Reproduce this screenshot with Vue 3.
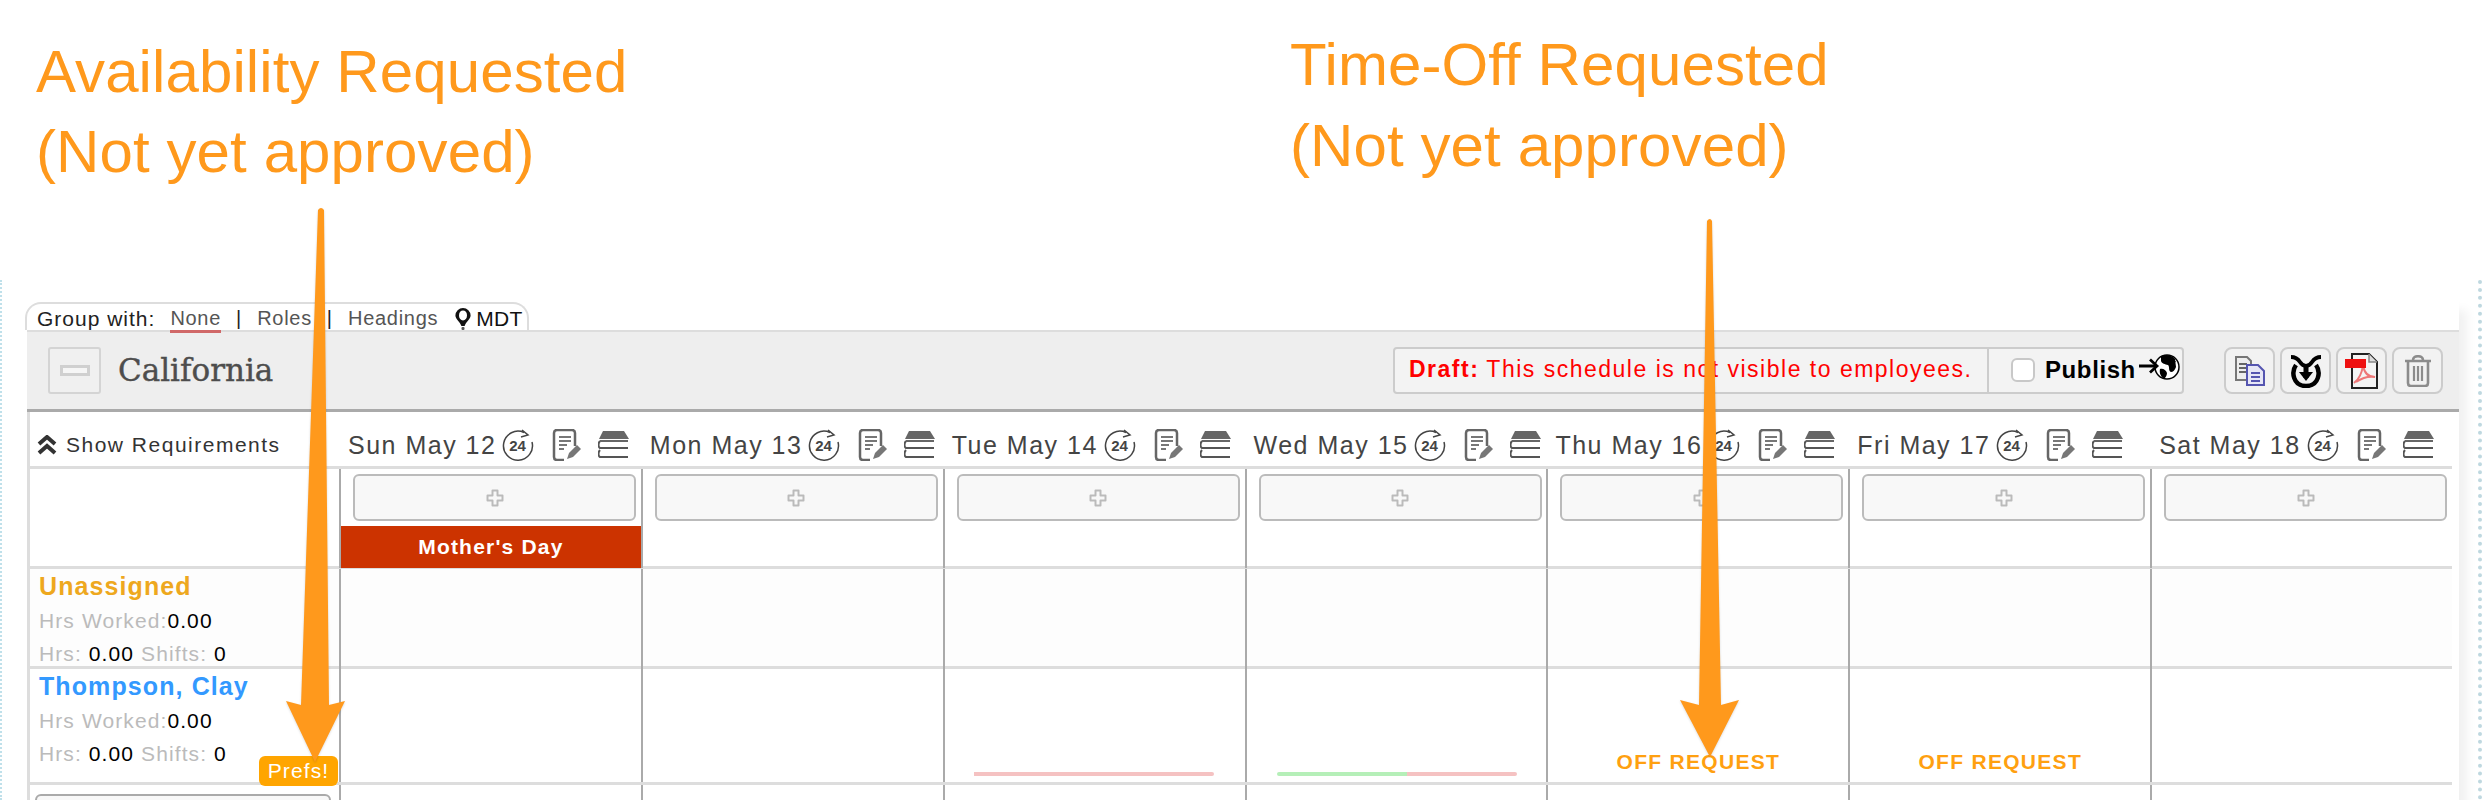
<script setup>
const days = ['Sun May 12', 'Mon May 13', 'Tue May 14', 'Wed May 15', 'Thu May 16', 'Fri May 17', 'Sat May 18']

const people = [
  { name: 'Unassigned', color: '#eea81e', cls: 'row-a', prefs: false, cells: [{}, {}, {}, {}, {}, {}, {}] },
  {
    name: 'Thompson, Clay',
    color: '#3399ff',
    cls: 'row-b',
    prefs: true,
    cells: [
      {},
      {},
      { bars: [{ w: 240, c: '#f5c2c2' }], left: 29 },
      { bars: [{ w: 130, c: '#b5efb8' }, { w: 110, c: '#f5c2c2' }], left: 30 },
      { off: true },
      { off: true },
      {}
    ]
  }
]
</script>

<template>
  <div class="page">
    <div class="notes">
      <p class="note note-left">Availability Requested<br>(Not yet approved)</p>
      <p class="note note-right">Time-Off Requested<br>(Not yet approved)</p>
    </div>

    <div class="frame">
      <div class="panel">
        <div class="tab">
          <span class="tab-label">Group with:</span>
          <a class="tab-link active">None</a>
          <span class="pipe">|</span>
          <a class="tab-link">Roles</a>
          <span class="pipe">|</span>
          <a class="tab-link">Headings</a>
          <span class="tz">
            <svg width="18" height="24" viewBox="0 0 18 24">
              <path d="M9 1a7.6 7.6 0 0 0-7.6 7.6c0 3.6 4.6 6.2 6 10.4h3.200c1.400-4.200 6-6.800 6-10.400A7.600 7.600 0 0 0 9 1z" fill="#111" />
              <ellipse cx="9" cy="8.400" rx="4" ry="5" fill="#fff" />
              <rect x="7.500" y="20" width="3" height="3" rx="1" fill="#555" />
            </svg>
            MDT
          </span>
        </div>

        <div class="head">
          <button class="collapse"><span class="minus"></span></button>
          <h2 class="title">California</h2>
          <div class="draft"><b>Draft:</b> This schedule is not visible to employees.</div>
          <label class="publish">
            <input type="checkbox">
            <b>Publish</b>
            <svg width="42" height="28" viewBox="0 0 42 28">
              <circle cx="29" cy="14" r="12" fill="#fff" stroke="#000" stroke-width="1.500" />
              <path d="M23 3c5-2 11-1 14 3l1 8c-1 3-3 5-5 5-3-1-1-5-3-7-3-1-6-1-7-4zM22 16c3-1 6 1 7 4 0 3-2 5-3 6-3-2-5-6-4-10zM35 4l3 5-3 1z" fill="#000" />
              <path d="M1 13h17" stroke="#000" stroke-width="3" />
              <path d="M12 6.500l7 6.500-7 6.500" fill="none" stroke="#000" stroke-width="2.800" />
            </svg>
          </label>
          <button class="tool">
            <svg width="34" height="30" viewBox="0 0 34 30">
              <path d="M3 1h11l4 4v19H3z" fill="#eee" stroke="#777" stroke-width="2" />
              <path d="M6 8h8M6 12h8M6 16h8" stroke="#666" stroke-width="2" />
              <path d="M14 9h11l6 6v14H14z" fill="#e6e6f6" stroke="#5555b0" stroke-width="2" />
              <path d="M18 17h9M18 21h9M18 25h9" stroke="#5555b0" stroke-width="2" />
            </svg>
          </button>
          <button class="tool">
            <svg width="32" height="34" viewBox="0 0 32 34">
              <path d="M1 3c5 0 7 2 9 5s4 4 6 4 4-1 6-4 4-5 9-5" fill="none" stroke="#000" stroke-width="4" />
              <path d="M6 11c-5 7-3 21 10 21s15-14 10-21" fill="none" stroke="#000" stroke-width="4.500" />
              <path d="M16 12v12" stroke="#000" stroke-width="5" />
              <path d="M9 18l7 9 7-9z" fill="#000" />
            </svg>
          </button>
          <button class="tool">
            <svg width="36" height="36" viewBox="0 0 36 36">
              <path d="M8 1h17l8 8v26H8z" fill="#f4f4f4" stroke="#222" stroke-width="2" />
              <path d="M25 1v8h8" fill="#ddd" stroke="#888" stroke-width="1.500" />
              <path d="M19 12c-1 8-5 15-9 18M19 12c1 7 5 12 12 12-6-1-13 1-19 5" fill="none" stroke="#ee7777" stroke-width="2" />
              <rect x="1" y="6" width="21" height="9" fill="#ee1111" />
            </svg>
          </button>
          <button class="tool">
            <svg width="30" height="32" viewBox="0 0 30 32">
              <path d="M2 6h26M10 5c0-5 10-5 10 0" fill="none" stroke="#8c8c8c" stroke-width="2.600" />
              <path d="M5 7v21c0 2 1 3 3 3h14c2 0 3-1 3-3V7" fill="none" stroke="#8c8c8c" stroke-width="2.600" />
              <path d="M11 11v15M15 11v15M19 11v15" stroke="#8c8c8c" stroke-width="2.200" />
            </svg>
          </button>
        </div>

        <div class="grid">
          <div class="row dates">
            <div class="side req">
              <svg width="20" height="20" viewBox="0 0 20 20">
                <path d="M2 9l8-7 8 7M2 18l8-7 8 7" fill="none" stroke="#333" stroke-width="4" />
              </svg>
              <span>Show Requirements</span>
            </div>
            <div v-for="d in days" :key="d" class="date">
              <span class="date-text">{{ d }}</span>
              <svg class="ic-clock" width="32" height="32" viewBox="0 0 32 32">
                <path d="M22 3.500A14.500 14.500 0 1 0 30 13" fill="none" stroke="#444" stroke-width="1.500" />
                <path d="M20 1l6 5-7 2" fill="none" stroke="#444" stroke-width="1.500" />
                <text x="15.500" y="21.500" class="clock-num">24</text>
              </svg>
              <svg class="ic-note" width="30" height="32" viewBox="0 0 30 32">
                <path d="M13 31H6c-2 0-3-1-3-3V4c0-2 1-3 3-3h15c2 0 3 1 3 3v13" fill="none" stroke="#666" stroke-width="2.500" />
                <path d="M8 8h12M8 12h12M8 16h8M8 20h5" stroke="#777" stroke-width="2" />
                <path d="M16 30l2-6 8-8 4 4-8 8z" fill="#777" />
              </svg>
              <svg class="ic-books" width="32" height="28" viewBox="0 0 32 28">
                <path d="M5 0h21l5 8H1z" fill="#666" />
                <path d="M2 10h28M2 10c-2 2-2 6 0 7h28M2 19c-2 2-2 6 0 7h28" fill="none" stroke="#555" stroke-width="2" />
                <path d="M2 9h28v2H2z" fill="#666" />
              </svg>
            </div>
          </div>

          <div class="row adds">
            <div class="side"></div>
            <div v-for="(d, i) in days" :key="d" class="cell add-cell">
              <button class="add">
                <svg width="20" height="20" viewBox="0 0 20 20">
                  <path d="M7.500 2.500h5v5h5v5h-5v5h-5v-5h-5v-5h5z" fill="#f8f8f8" stroke="#bbb" stroke-width="2" stroke-linejoin="round" />
                </svg>
              </button>
              <div v-if="i === 0" class="holiday">Mother's Day</div>
            </div>
          </div>

          <div v-for="p in people" :key="p.name" class="row" :class="p.cls">
            <div class="side person">
              <div class="name" :style="{ color: p.color }">{{ p.name }}</div>
              <div class="stat">Hrs Worked:<em>0.00</em></div>
              <div class="stat">Hrs: <em>0.00</em> Shifts: <em>0</em></div>
              <span v-if="p.prefs" class="prefs">Prefs!</span>
            </div>
            <div v-for="(c, i) in p.cells" :key="i" class="cell person-cell">
              <div v-if="c.off" class="off">OFF REQUEST</div>
              <div v-if="c.bars" class="bars" :style="{ marginLeft: c.left + 'px' }">
                <span v-for="b in c.bars" :key="b.c" :style="{ width: b.w + 'px', background: b.c }"></span>
              </div>
            </div>
          </div>

          <div class="row last">
            <div class="side"><button class="wide"></button></div>
            <div v-for="d in days" :key="d" class="cell"></div>
          </div>
        </div>
      </div>
    </div>

    <svg class="arrows" width="2482" height="800" viewBox="0 0 2482 800">
      <path d="M318 210q3-4 6 0l5 495 16-4-30 61-29-61 15 4z" />
      <path d="M1707 221q3-4 5 0l9 484 18-5-29 57-30-57 19 5z" />
    </svg>
  </div>
</template>

<style>
html, body { height: 800px; overflow: hidden; background: #fff; }
</style>

<style scoped>
.page {
  position: relative;
  width: 2482px;
  height: 800px;
  overflow: hidden;
  font-family: "Liberation Sans", Arial, sans-serif;
  color: #333;
}

.notes { display: flex; height: 280px; }
.note {
  margin: 0;
  font-size: 60px;
  letter-spacing: .1px;
  line-height: 80px;
  color: #ff991c;
  white-space: nowrap;
}
.note-left { margin: 32px 0 0 36px; width: 1254px; }
.note-right { margin-top: 24px; line-height: 81px; }

.frame {
  height: 520px;
  padding: 22px 0 0 25px;
  box-sizing: border-box;
  border-left: 2px dotted #bfe0ea;
  border-right: 4px dotted #bfd8e0;
}
.panel { width: 2432px; box-shadow: 8px 8px 10px rgba(0, 0, 0, .06); }

.tab {
  display: flex;
  align-items: center;
  width: 504px;
  height: 28px;
  box-sizing: border-box;
  padding: 3px 0 0 10px;
  margin-left: -2px;
  border: 2px solid #ddd;
  border-bottom: 0;
  border-radius: 16px 16px 0 0;
  font-size: 21px;
  letter-spacing: 1px;
  white-space: nowrap;
}
.tab-label { color: #222; margin-right: 15px; }
.tab-link { color: #555; font-size: 20px; letter-spacing: .7px; }
.tab-link.active { box-shadow: 0 3px 0 #d06868; line-height: 23px; }
.pipe { color: #222; margin: 0 15px; font-size: 20px; }
.tz { display: flex; align-items: center; gap: 4px; color: #111; margin-left: 16px; letter-spacing: .3px; }

.head {
  display: flex;
  align-items: center;
  height: 82px;
  box-sizing: border-box;
  padding: 0 16px 0 21px;
  background: #eee;
  border-top: 2px solid #ddd;
  border-bottom: 3px solid #aaa;
}
.collapse {
  display: flex;
  align-items: center;
  justify-content: center;
  width: 53px;
  height: 47px;
  padding: 0;
  background: #f0f0f0;
  border: 2px solid #d4d4d4;
  border-radius: 3px;
}
.minus {
  width: 30px;
  height: 11px;
  box-sizing: border-box;
  background: #f6f6f6;
  border: 3px solid #d0d0d0;
}
.title {
  flex: 1;
  margin: -2px 0 0 17px;
  font-family: "DejaVu Serif", serif;
  font-size: 31px;
  font-weight: 400;
  color: #4d4d4d;
  -webkit-text-stroke: .4px #4d4d4d;
}
.draft, .publish {
  display: flex;
  align-items: center;
  height: 47px;
  box-sizing: border-box;
  padding-bottom: 2px;
  background: #f3f3f3;
  border: 2px solid #ccc;
  white-space: nowrap;
}
.draft {
  width: 596px;
  padding-left: 14px;
  color: #f00;
  font-size: 23px;
  letter-spacing: 1.500px;
  border-radius: 4px 0 0 4px;
}
.draft b { margin-right: 7px; }
.publish {
  width: 195px;
  padding-left: 22px;
  color: #000;
  font-size: 24px;
  letter-spacing: .6px;
  border-left: 0;
  border-radius: 0 4px 4px 0;
  margin-right: 35px;
}
.publish input {
  appearance: none;
  width: 24px;
  height: 24px;
  margin: 0 10px 0 0;
  background: #fff;
  border: 2px solid #c8c8c8;
  border-radius: 6px;
}
.publish svg { margin: 0 0 6px 2px; }
.tool {
  display: flex;
  align-items: center;
  justify-content: center;
  width: 51px;
  height: 47px;
  padding: 0;
  margin-left: 5px;
  background: #f2f2f2;
  border: 2px solid #ccc;
  border-radius: 8px;
}

.grid { width: 2425px; }
.row {
  display: grid;
  grid-template-columns: 312px repeat(7, 1fr);
  border-bottom: 3px solid #ddd;
  box-sizing: border-box;
}
.side { border-left: 3px solid #ddd; position: relative; }

.dates { height: 57px; }
.req {
  display: flex;
  align-items: center;
  gap: 9px;
  padding: 12px 0 0 7px;
  font-size: 21px;
  letter-spacing: 1.500px;
}
.date {
  display: flex;
  align-items: center;
  padding: 12px 0 0 9px;
  font-size: 25px;
  letter-spacing: 1.500px;
  color: #444;
  white-space: nowrap;
}
.ic-clock { margin-left: 6px; flex: none; }
.ic-note { margin-left: 17px; flex: none; }
.ic-books { margin-left: 17px; flex: none; }
.clock-num { font-size: 15px; font-weight: 700; text-anchor: middle; letter-spacing: 0; fill: #444; }

.cell { border-left: 2px solid #aaa; min-width: 0; }
.adds { height: 100px; }
.add-cell { padding-top: 5px; box-sizing: border-box; }
.add {
  display: flex;
  align-items: center;
  justify-content: center;
  width: 283px;
  height: 47px;
  margin-left: 12px;
  padding: 0;
  background: #f8f8f8;
  border: 2px solid #bbb;
  border-radius: 6px;
}
.holiday {
  margin-top: 5px;
  height: 42px;
  line-height: 42px;
  text-align: center;
  background: #cc3300;
  color: #fff;
  font-size: 21px;
  font-weight: 700;
  letter-spacing: 1.200px;
}

.row-a { height: 100px; background: #fdfdfd; }
.row-b { height: 116px; }
.person { padding: 1px 0 0 9px; }
.name { font-size: 25px; font-weight: 700; letter-spacing: 1.100px; line-height: 32px; margin-bottom: 2px; }
.stat { font-size: 21px; letter-spacing: 1.100px; color: #bbb; line-height: 33px; white-space: nowrap; }
.stat em { font-style: normal; color: #000; }
.prefs {
  position: absolute;
  right: 1px;
  bottom: -4px;
  width: 79px;
  height: 30px;
  line-height: 30px;
  text-align: center;
  color: #fff;
  background: #ffa500;
  border-radius: 6px;
  font-size: 21px;
  letter-spacing: 1.100px;
}

.person-cell { display: flex; flex-direction: column; justify-content: flex-end; }
.off {
  margin-bottom: 8px;
  text-align: center;
  font-size: 21px;
  font-weight: 700;
  letter-spacing: 1.300px;
  color: #ffa010;
}
.bars { display: flex; margin-bottom: 6px; }
.bars span { height: 4px; }
.bars span:first-child { border-radius: 2px 0 0 2px; }
.bars span:last-child { border-radius: 0 2px 2px 0; }

.last .side { padding: 9px 0 0 5px; }
.wide {
  display: block;
  width: 296px;
  height: 40px;
  background: #f8f8f8;
  border: 2px solid #aaa;
  border-radius: 6px;
}
.last { height: 60px; border: 0; }

.arrows { position: absolute; left: 0; top: 0; pointer-events: none; }
.arrows path { fill: #ff991c; filter: drop-shadow(0 1px 1px rgba(0, 0, 0, .15)); }
</style>
